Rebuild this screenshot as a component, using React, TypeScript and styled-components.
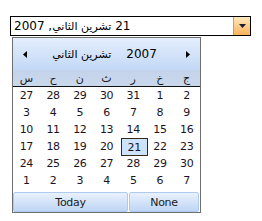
import React from "react";
import styled, { createGlobalStyle } from "styled-components";

const Global = createGlobalStyle`
  html, body { margin: 0; padding: 0; background: #fff; }
  body { font-family: "DejaVu Sans", Tahoma, sans-serif; }
`;

const Page = styled.div`
  width: 262px;
  height: 221px;
  box-sizing: border-box;
  padding: 16px 0 0 10px;
`;

const Field = styled.div`
  display: flex;
  width: 241px;
  height: 20px;
  box-sizing: border-box;
  border: 1px solid #000;
  background: #fff;
`;

const FieldText = styled.div`
  flex: 1;
  display: flex;
  align-items: center;
  padding-left: 3px;
  font-size: 12px;
  letter-spacing: -0.2px;
  color: #000;
  white-space: nowrap;
`;

const Arabic = styled.span<{ $size?: number }>`
  font-family: "DejaVu Sans", sans-serif;
  font-size: ${(p) => p.$size ?? 11}px;
  letter-spacing: 0;
`;

const DropButton = styled.div`
  width: 16px;
  border-left: 1px solid #b3a56c;
  background: linear-gradient(#fee8bc, #f8b35c);
  display: flex;
  align-items: center;
  justify-content: center;
`;

const Calendar = styled.div`
  margin: 1px 0 0 2px;
  width: 189px;
  height: 176px;
  box-sizing: border-box;
  border: 1px solid #6f6f6f;
  background: #fff;
  display: flex;
  flex-direction: column;
`;

const Header = styled.div`
  height: 32px;
  display: grid;
  grid-template-columns: 4px 1fr 4px;
  align-items: center;
  padding: 0 10px;
  background: linear-gradient(#e4eefd, #c3d8f6);
`;

const Title = styled.div`
  display: flex;
  align-items: center;
  justify-content: center;
  gap: 15px;
  font-size: 12px;
  color: #000;
  margin-right: 4px;
`;

const DayRow = styled.div`
  height: 17px;
  box-sizing: border-box;
  border-bottom: 1px solid #111;
  display: grid;
  grid-template-columns: repeat(7, 1fr);
  background: linear-gradient(#c3d3ea, #cad8ec);
`;

const DayName = styled.div`
  display: flex;
  align-items: center;
  justify-content: center;
  font-size: 11px;
  color: #1a1a1a;
`;

const Grid = styled.div`
  display: grid;
  grid-template-columns: repeat(7, 1fr);
  grid-auto-rows: 17px;
`;

const Cell = styled.div<{ $selected?: boolean }>`
  display: flex;
  align-items: center;
  justify-content: center;
  font-size: 11px;
  letter-spacing: -0.4px;
  color: #1c1424;
  box-sizing: border-box;
  ${(p) =>
    p.$selected
      ? `border: 1px solid #35281a; background: #cde3fb; margin: 0 -1px -1px 1px;`
      : ""}
`;

const Footer = styled.div`
  display: flex;
  gap: 1px;
  padding: 3px 1px 0 0;
  height: 20px;
`;

const FooterButton = styled.div<{ $w: number }>`
  width: ${(p) => p.$w}px;
  height: 20px;
  box-sizing: border-box;
  border: 1px solid #aecaf0;
  border-radius: 2px;
  background: linear-gradient(#e9f1fd, #bfd6f5);
  display: flex;
  align-items: center;
  justify-content: center;
  font-size: 11px;
  letter-spacing: -0.3px;
  color: #1a1a1a;
`;

const Arrow = ({ dir }: { dir: "left" | "right" }) => (
  <svg width="4" height="7" viewBox="0 0 4 7">
    {dir === "left" ? <path d="M4 0V7L0 3.5Z" fill="#000" /> : <path d="M0 0V7L4 3.5Z" fill="#000" />}
  </svg>
);

const days = ["س", "ح", "ن", "ث", "ر", "خ", "ج"];
const dates = [
  27, 28, 29, 30, 31, 1, 2,
  3, 4, 5, 6, 7, 8, 9,
  10, 11, 12, 13, 14, 15, 16,
  17, 18, 19, 20, 21, 22, 23,
  24, 25, 26, 27, 28, 29, 30,
  1, 2, 3, 4, 5, 6, 7,
];

export default function App() {
  return (
    <>
      <Global />
      <Page>
        <Field>
          <FieldText>
            <span dir="rtl">
              21 <Arabic>تشرين الثاني</Arabic>, 2007
            </span>
          </FieldText>
          <DropButton>
            <svg width="7" height="4" viewBox="0 0 7 4">
              <path d="M0 0H7L3.5 4Z" fill="#1b1b33" />
            </svg>
          </DropButton>
        </Field>
        <Calendar>
          <Header>
            <Arrow dir="left" />
            <Title>
              <Arabic as="bdi">تشرين الثاني</Arabic>
              <span>2007</span>
            </Title>
            <Arrow dir="right" />
          </Header>
          <DayRow>
            {days.map((d) => (
              <DayName key={d}>{d}</DayName>
            ))}
          </DayRow>
          <Grid>
            {dates.map((d, i) => (
              <Cell key={i} $selected={i === 25}>
                {d}
              </Cell>
            ))}
          </Grid>
          <Footer>
            <FooterButton $w={115}>Today</FooterButton>
            <FooterButton $w={70}>None</FooterButton>
          </Footer>
        </Calendar>
      </Page>
    </>
  );
}
